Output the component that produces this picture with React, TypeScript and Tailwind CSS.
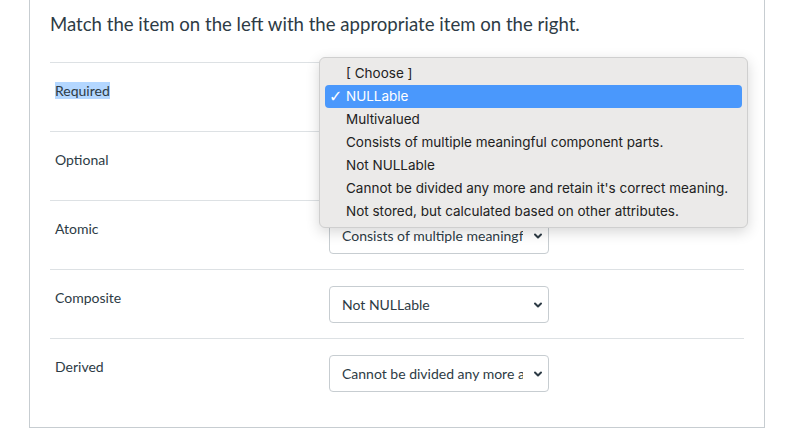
import { ChevronDown } from 'lucide-react';

const rows = [
  { label: 'Required', value: 'NULLable', selected: true },
  { label: 'Optional', value: 'Multivalued' },
  { label: 'Atomic', value: 'Consists of multiple meaningful component parts.' },
  { label: 'Composite', value: 'Not NULLable' },
  { label: 'Derived', value: "Cannot be divided any more and retain it's correct meaning." },
];

const options = [
  '[ Choose ]',
  'NULLable',
  'Multivalued',
  'Consists of multiple meaningful component parts.',
  'Not NULLable',
  "Cannot be divided any more and retain it's correct meaning.",
  'Not stored, but calculated based on other attributes.',
];

function FakeSelect({ value }: { value: string }) {
  return (
    <div className="mt-[16px] w-[220px] h-[37px] flex items-center border border-[#c7cdd1] rounded-[4px] bg-white pl-[12px]">
      <span className="w-[181px] overflow-hidden whitespace-nowrap text-[14px] text-[#2d3b45]">{value}</span>
      <ChevronDown className="w-[12px] h-[12px] text-[#2d3b45] ml-[9px]" strokeWidth={4} />
    </div>
  );
}

export default function App() {
  return (
    <div className="bg-white min-h-[444px] font-['Lato','Noto_Sans',sans-serif]">
      <div className="relative ml-[29px] w-[736px] border-x border-b border-[#c7cdd1] px-[20px] pb-[20px]">
        <h1 className="pt-[11px] pb-[24px] text-[18.6px] leading-[27px] text-[#2d3b45]">
          Match the item on the left with the appropriate item on the right.
        </h1>

        {rows.map((row) => (
          <div key={row.label} className="h-[69px] flex items-start border-t border-[#dde1e4]">
            <div className="w-[279px] pt-[18px] pl-[5px] text-[14px] leading-[20px] text-[#2d3b45]">
              <span className={row.selected ? 'bg-[#b4d7ff]' : ''}>{row.label}</span>
            </div>
            <FakeSelect value={row.value} />
          </div>
        ))}

        {/* open option list for the first select */}
        <div className="absolute left-[289px] top-[57px] w-[429px] rounded-[6px] border border-[#cfcfcf] bg-[#ebeae9] px-[5px] py-[4px] shadow-[0_4px_14px_rgba(0,0,0,0.16)] font-['Inter',sans-serif] text-[13.5px] text-[#222]">
          {options.map((opt, i) => (
            <div
              key={opt}
              className={
                i === 1
                  ? 'h-[23px] flex items-center rounded-[4px] bg-[#4a98fc] text-white'
                  : 'h-[23px] flex items-center'
              }
            >
              <span className="w-[21px] pl-[4px] font-['DejaVu_Sans',sans-serif] text-[16px] leading-none">
                {i === 1 ? '✓' : ''}
              </span>
              <span>{opt}</span>
            </div>
          ))}
        </div>
      </div>
    </div>
  );
}
